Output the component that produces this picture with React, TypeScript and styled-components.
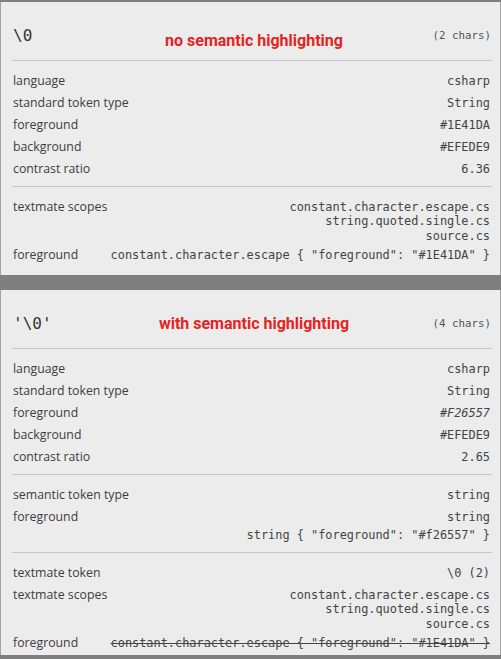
import React from "react"
import styled, { createGlobalStyle } from "styled-components"

const GlobalStyle = createGlobalStyle`
  html, body {
    margin: 0;
    padding: 0;
    background: #7f7f7f;
  }
`

type Row = {
  label: string
  lines: string[]
  italic?: boolean
  struck?: boolean
  compact?: boolean
}

type Inspect = {
  token: string
  chars: string
  note: string
  noteDrop: number
  sections: Row[][]
}

const scopes = ["constant.character.escape.cs", "string.quoted.single.cs", "source.cs"]
const tmRule = 'constant.character.escape { "foreground": "#1E41DA" }'

const panels: Inspect[] = [
  {
    token: "\\0",
    chars: "(2 chars)",
    note: "no semantic highlighting",
    noteDrop: 10,
    sections: [
      [
        { label: "language", lines: ["csharp"] },
        { label: "standard token type", lines: ["String"] },
        { label: "foreground", lines: ["#1E41DA"] },
        { label: "background", lines: ["#EFEDE9"] },
        { label: "contrast ratio", lines: ["6.36"] },
      ],
      [
        { label: "textmate scopes", lines: scopes },
        { label: "foreground", lines: [tmRule] },
      ],
    ],
  },
  {
    token: "'\\0'",
    chars: "(4 chars)",
    note: "with semantic highlighting",
    noteDrop: 0,
    sections: [
      [
        { label: "language", lines: ["csharp"] },
        { label: "standard token type", lines: ["String"] },
        { label: "foreground", lines: ["#F26557"], italic: true },
        { label: "background", lines: ["#EFEDE9"] },
        { label: "contrast ratio", lines: ["2.65"] },
      ],
      [
        { label: "semantic token type", lines: ["string"] },
        { label: "foreground", lines: ["string"] },
        { label: "", lines: ['string { "foreground": "#f26557" }'], compact: true },
      ],
      [
        { label: "textmate token", lines: ["\\0 (2)"] },
        { label: "textmate scopes", lines: scopes },
        { label: "foreground", lines: [tmRule], struck: true },
      ],
    ],
  },
]

const App = () => {
  return (
    <>
      <GlobalStyle />
      <Stack>
        {panels.map((p, i) => (
          <Panel key={i} $last={i === panels.length - 1}>
            <Header>
              <Token>{p.token}</Token>
              <Note $drop={p.noteDrop}>{p.note}</Note>
              <Chars>{p.chars}</Chars>
            </Header>
            {p.sections.map((rows, j) => (
              <Section key={j}>
                {rows.map((r, k) => (
                  <InfoRow key={k} $compact={r.compact}>
                    <Label>{r.label}</Label>
                    <Value $compact={r.compact} $italic={r.italic} $struck={r.struck}>
                      {r.lines.map((l, n) => (
                        <div key={n}>{l}</div>
                      ))}
                    </Value>
                  </InfoRow>
                ))}
              </Section>
            ))}
          </Panel>
        ))}
      </Stack>
    </>
  )
}
export default App

const Stack = styled.div`
  display: flex;
  flex-direction: column;
  gap: 15px;
  padding-top: 2px;
  height: 659px;
  box-sizing: border-box;
  overflow: hidden;
`

const Panel = styled.section<{ $last?: boolean }>`
  background: #ececec;
  border-left: 1px solid #a4a4a4;
  border-right: 1px solid #a4a4a4;
  padding: 0 8px ${(p) => (p.$last ? "2px" : "10px")} 11px;
`

const Header = styled.div`
  height: 58px;
  box-sizing: border-box;
  padding-top: 8px;
  display: grid;
  grid-template-columns: 1fr auto 1fr;
  align-items: center;
`

const Token = styled.div`
  font-family: "DejaVu Sans Mono", monospace;
  font-size: 16px;
  color: #333333;
  padding-left: 1px;
  white-space: pre;
`

const Note = styled.div<{ $drop: number }>`
  font-family: Roboto, "Liberation Sans", sans-serif;
  font-weight: 700;
  font-size: 16px;
  color: #e6231f;
  margin-top: ${(p) => p.$drop}px;
  padding-left: 4px;
`

const Chars = styled.div`
  justify-self: end;
  font-family: "DejaVu Sans Mono", monospace;
  font-size: 10.8px;
  color: #555555;
  white-space: pre;
  padding-right: 1px;
`

const Section = styled.div`
  border-top: 1px solid #c8c8c8;
  padding: 8px 0 7px;
  &:last-child {
    padding-bottom: 0;
  }
`

const InfoRow = styled.div<{ $compact?: boolean }>`
  display: flex;
  justify-content: space-between;
  align-items: flex-start;
  gap: 12px;
  height: ${(p) => (p.$compact ? "18px" : "auto")};
`

const Label = styled.div`
  font-family: "Open Sans", "Noto Sans", sans-serif;
  font-size: 12.3px;
  line-height: 20px;
  padding-top: 2px;
  color: #3d3d3d;
  padding-left: 1px;
  white-space: nowrap;
`

const Value = styled.div<{ $compact?: boolean; $italic?: boolean; $struck?: boolean }>`
  font-family: "DejaVu Sans Mono", monospace;
  font-size: 11.9px;
  line-height: ${(p) => (p.$compact ? "14px" : "14.5px")};
  padding-top: ${(p) => (p.$compact ? "1px" : "4.5px")};
  padding-right: 2px;
  text-align: right;
  white-space: pre;
  color: #444444;
  font-style: ${(p) => (p.$italic ? "italic" : "normal")};
  text-decoration: ${(p) => (p.$struck ? "line-through" : "none")};
`
